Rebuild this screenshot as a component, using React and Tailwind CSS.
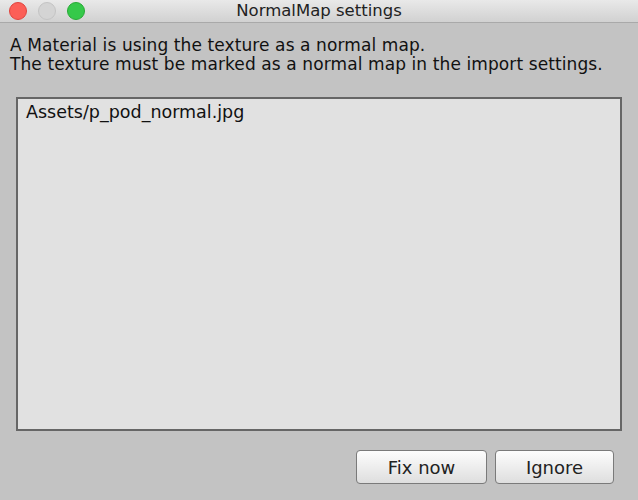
export default function App() {
  const font = { fontFamily: '"DejaVu Sans", "Lucida Grande", sans-serif' };
  return (
    <div className="w-[638px] h-[500px] bg-[#c3c3c3] flex flex-col overflow-hidden text-[#111]" style={font}>
      <div className="relative h-[23px] shrink-0 flex items-center justify-center border-b border-[#a9a9a9] bg-gradient-to-b from-[#e9e9e9] to-[#d1d1d1]">
        <div className="absolute left-[9px] top-[2px] flex gap-[11px]">
          <span className="w-[18px] h-[18px] rounded-full bg-[#fc5f57] border border-[#e0443e]" />
          <span className="w-[18px] h-[18px] rounded-full bg-[#d4d4d4] border border-[#c4c4c4]" />
          <span className="w-[18px] h-[18px] rounded-full bg-[#35c94a] border border-[#27aa35]" />
        </div>
        <span className="text-[16.5px] text-[#222]">NormalMap settings</span>
      </div>
      <div className="px-[10px] pt-[13px] text-[17px] leading-[19px] tracking-[0.1px]">
        <p>A Material is using the texture as a normal map.</p>
        <p>The texture must be marked as a normal map in the import settings.</p>
      </div>
      <div className="ml-[16px] mt-[23px] w-[606px] h-[334px] shrink-0 bg-[#e1e1e1] border-2 border-[#666] px-[8px] pt-[1px] text-[17.5px] leading-[24px]">
        Assets/p_pod_normal.jpg
      </div>
      <div className="flex justify-end gap-[8px] mr-[24px] mt-[19px]">
        <button className="w-[131px] h-[34px] rounded-[4px] border border-[#7a7a7a] bg-gradient-to-b from-[#fdfdfd] to-[#dedede] text-[18px] text-[#222]">
          Fix now
        </button>
        <button className="w-[119px] h-[34px] rounded-[4px] border border-[#7a7a7a] bg-gradient-to-b from-[#fdfdfd] to-[#dedede] text-[18px] text-[#222]">
          Ignore
        </button>
      </div>
    </div>
  );
}
